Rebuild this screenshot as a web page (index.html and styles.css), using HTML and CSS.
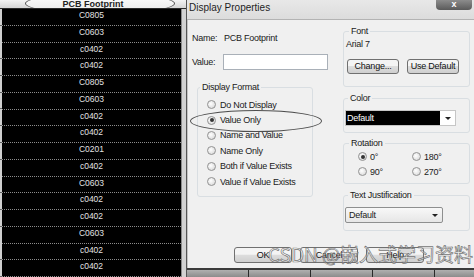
FILE: index.html
```html
<!DOCTYPE html>
<html lang="en">
<head>
  <meta charset="UTF-8" />
  <title>Display Properties</title>
  <link rel="stylesheet" href="styles.css">
</head>
<body>
  <div class="screen">
    <div class="list">
      <div class="list-head">
        <span class="head-ring"></span>
        <span class="head-text">PCB Footprint</span>
      </div>
      <div class="list-body">
        <div class="gutter"></div>
        <div class="rows">
          <div class="row">C0805</div>
          <div class="row">C0603</div>
          <div class="row">c0402</div>
          <div class="row">c0402</div>
          <div class="row">C0805</div>
          <div class="row">C0603</div>
          <div class="row">c0402</div>
          <div class="row">c0402</div>
          <div class="row">C0201</div>
          <div class="row">c0402</div>
          <div class="row">C0603</div>
          <div class="row">c0402</div>
          <div class="row">c0402</div>
          <div class="row">C0603</div>
          <div class="row">c0402</div>
          <div class="row">c0402</div>
        </div>
        <div class="vscroll"></div>
      </div>
    </div>

    <div class="dialog">
      <div class="titlebar">
        <span class="title">Display Properties</span>
        <span class="close">x</span>
      </div>
      <div class="dbody">
        <div class="panes">
          <div class="pane-left">
            <div class="name-row"><span class="lbl">Name:</span><span>PCB Footprint</span></div>
            <div class="value-row"><span class="lbl">Value:</span><span class="textbox"></span></div>
            <fieldset class="group fmt">
              <legend>Display Format</legend>
              <div class="opt"><span class="radio"></span>Do Not Display</div>
              <div class="opt"><span class="radio on"></span>Value Only</div>
              <div class="opt"><span class="radio"></span>Name and Value</div>
              <div class="opt"><span class="radio"></span>Name Only</div>
              <div class="opt"><span class="radio"></span>Both if Value Exists</div>
              <div class="opt"><span class="radio"></span>Value if Value Exists</div>
            </fieldset>
          </div>

          <div class="pane-right">
            <fieldset class="group side font-group">
              <legend>Font</legend>
              <div class="font-name">Arial 7</div>
              <div class="btn-row">
                <span class="btn small">Change...</span>
                <span class="btn small">Use Default</span>
              </div>
            </fieldset>

            <fieldset class="group side color-group">
              <legend>Color</legend>
              <div class="combo">
                <span class="combo-val">Default</span>
                <span class="combo-arrow"><span class="tri"></span></span>
              </div>
            </fieldset>

            <fieldset class="group side rot-group">
              <legend>Rotation</legend>
              <div class="rot-grid">
                <div class="opt"><span class="radio on"></span>0°</div>
                <div class="opt"><span class="radio"></span>180°</div>
                <div class="opt"><span class="radio"></span>90°</div>
                <div class="opt"><span class="radio"></span>270°</div>
              </div>
            </fieldset>

            <fieldset class="group side just-group">
              <legend>Text Justification</legend>
              <div class="dropdown">
                <span>Default</span>
                <span class="tri"></span>
              </div>
            </fieldset>
          </div>
        </div>

        <div class="buttons">
          <span class="btn">OK</span>
          <span class="btn">Cancel</span>
          <span class="btn">Help</span>
        </div>
      </div>
      <div class="taskstrip"></div>
    </div>

    <div class="value-ring"></div>
    <div class="watermark">CSDN @嵌入式学习资料</div>
  </div>
</body>
</html>
```

FILE: styles.css
```css
body {
  margin: 0;
  font-family: "Liberation Sans", Arial, sans-serif;
  background: #f0f0f0;
}
.screen {
  position: relative;
  width: 474px;
  height: 277px;
  overflow: hidden;
  display: flex;
}

/* grid on the left */
.list {
  width: 186px;
  display: flex;
  flex-direction: column;
  background: #000;
}
.list-head {
  position: relative;
  height: 14px;
  border-bottom: 1px solid #2a2a2a;
  background: linear-gradient(#f4f4f4, #d6d6d6);
  display: flex;
  justify-content: center;
  align-items: center;
  overflow: hidden;
}
.head-ring {
  position: absolute;
  left: 25px;
  top: -7px;
  width: 148px;
  height: 19px;
  border: 1.5px solid #555;
  border-radius: 50%;
  background: linear-gradient(#ffffff, #e8e8e8);
}
.head-text {
  position: relative;
  font-size: 9px;
  font-weight: bold;
  color: #222;
}
.list-body {
  flex: 1;
  display: flex;
}
.gutter {
  width: 2px;
  background: repeating-linear-gradient(to bottom, #cfcfcf 0 15.75px, #666 15.75px 16.75px);
}
.rows {
  flex: 1;
}
.row {
  box-sizing: border-box;
  height: 16.75px;
  border-bottom: 1px dotted #8c8c8c;
  color: #e2e2e2;
  font-size: 8.5px;
  line-height: 12px;
  text-align: center;
}
.vscroll {
  width: 4px;
  border-left: 1px solid #8a8a8a;
  background: #d2d2d2;
}

/* dialog */
.dialog {
  flex: 1;
  display: flex;
  flex-direction: column;
  border-left: 1px solid #555;
}
.titlebar {
  height: 19px;
  border-bottom: 1px solid #b3b3b3;
  background: linear-gradient(#e8e8e8, #dcdcdc);
  display: flex;
  align-items: flex-start;
}
.title {
  padding-left: 2px;
  font-size: 10px;
  line-height: 16px;
  color: #1e1e1e;
}
.close {
  margin-left: auto;
  margin-right: 2px;
  width: 36px;
  height: 10px;
  border-radius: 0 0 4px 4px;
  background: linear-gradient(#8c8c8c, #5a5a5a);
  color: #fff;
  font-size: 9px;
  font-weight: bold;
  line-height: 9px;
  text-align: center;
}
.dbody {
  flex: 1;
  display: flex;
  flex-direction: column;
  border-left: 1px solid #c4c4c4;
  background: #f0f0f0;
  font-size: 9px;
  letter-spacing: -0.25px;
  color: #1a1a1a;
}
.panes {
  display: flex;
}
.pane-left {
  width: 151px;
  padding-left: 4px;
}
.name-row {
  margin-top: 12px;
  line-height: 12px;
}
.lbl {
  display: inline-block;
  width: 31px;
}
.name-row .lbl {
  width: 32px;
}
.value-row {
  margin-top: 10px;
  display: flex;
  align-items: center;
  height: 16px;
}
.textbox {
  box-sizing: border-box;
  width: 105px;
  height: 16px;
  border: 1px solid #a9b0b8;
  background: #fff;
}

.group {
  margin: 0;
  padding: 0 2px;
  border: 1px solid #d9dee2;
  border-radius: 3px;
}
.group legend {
  padding: 0 2px;
  line-height: 12px;
}
.fmt {
  box-sizing: border-box;
  width: 116px;
  margin: 11px 0 0 5px;
  padding: 4px 0 7px 9px;
}
.fmt legend {
  margin-left: -7px;
}
.opt {
  height: 15.4px;
  display: flex;
  align-items: center;
  gap: 4px;
  white-space: nowrap;
}
.radio {
  position: relative;
  box-sizing: border-box;
  width: 9px;
  height: 9px;
  border: 1px solid #929292;
  border-radius: 50%;
  background: radial-gradient(circle at 40% 40%, #ffffff, #d2d2d2);
  flex: none;
}
.radio.on::after {
  content: "";
  position: absolute;
  left: 1.5px;
  top: 1.5px;
  width: 4px;
  height: 4px;
  border-radius: 50%;
  background: #333;
}

.pane-right {
  width: 127px;
}
.side {
  box-sizing: border-box;
  width: 127px;
}
.side legend {
  margin-left: 3px;
}
.font-group {
  margin-top: 5px;
  padding-bottom: 12px;
}
.font-name {
  margin-top: 1px;
  line-height: 12px;
}
.btn-row {
  margin: 9px 0 0 1px;
  display: flex;
  gap: 8px;
}
.btn {
  box-sizing: border-box;
  height: 16px;
  border: 1px solid #707070;
  border-radius: 3px;
  background: linear-gradient(#f4f4f4 0 45%, #dddddd 50%, #cfcfcf);
  text-align: center;
  line-height: 14px;
  color: #111;
}
.btn.small {
  width: 52px;
  height: 15px;
  line-height: 13px;
}
.color-group {
  margin-top: 5px;
  padding: 6px 1px 6px;
}
.combo {
  box-sizing: border-box;
  width: 111px;
  height: 16px;
  border: 1px solid #c6c6c6;
  display: flex;
  background: #fff;
}
.combo-val {
  flex: 1;
  background: #000;
  color: #fff;
  line-height: 14px;
  padding-left: 1px;
}
.combo-arrow {
  width: 15px;
  display: flex;
  align-items: center;
  justify-content: center;
}
.tri {
  width: 0;
  height: 0;
  border-left: 3px solid transparent;
  border-right: 3px solid transparent;
  border-top: 3px solid #222;
}
.rot-group {
  margin-top: 4px;
  padding-bottom: 4px;
}
.rot-grid {
  margin-left: 12px;
  display: grid;
  grid-template-columns: 54px auto;
}
.rot-grid .opt {
  height: 15px;
  gap: 3px;
}
.just-group {
  margin-top: 5px;
  padding: 6px 1px 7px;
}
.dropdown {
  box-sizing: border-box;
  width: 98px;
  height: 16px;
  border: 1px solid #8e8f8f;
  border-radius: 2px;
  background: linear-gradient(#f8f8f8, #e6e6e6);
  display: flex;
  align-items: center;
  justify-content: space-between;
  padding: 0 4px 0 3px;
}

.buttons {
  margin-top: auto;
  padding: 0 0 5px 46px;
  display: flex;
  gap: 8px;
}
.buttons .btn {
  width: 58px;
}
.taskstrip {
  height: 7px;
  border-top: 2px solid #3b3b3b;
  background:
    repeating-linear-gradient(to right, transparent 0 61px, #2a2a2a 61px 62px),
    linear-gradient(#b0b0b0, #8c8c8c);
}

/* annotations drawn over the screenshot */
.value-ring {
  position: absolute;
  left: 190px;
  top: 110px;
  width: 130px;
  height: 20px;
  border: 1.5px solid #4e4e4e;
  border-radius: 50%;
}
.watermark {
  position: absolute;
  left: 268px;
  top: 242px;
  font-family: "Noto Sans CJK SC", sans-serif;
  font-size: 19px;
  line-height: 24px;
  color: rgba(255, 255, 255, 0.45);
  -webkit-text-stroke: 0.7px rgba(95, 95, 95, 0.85);
  white-space: nowrap;
}
```
